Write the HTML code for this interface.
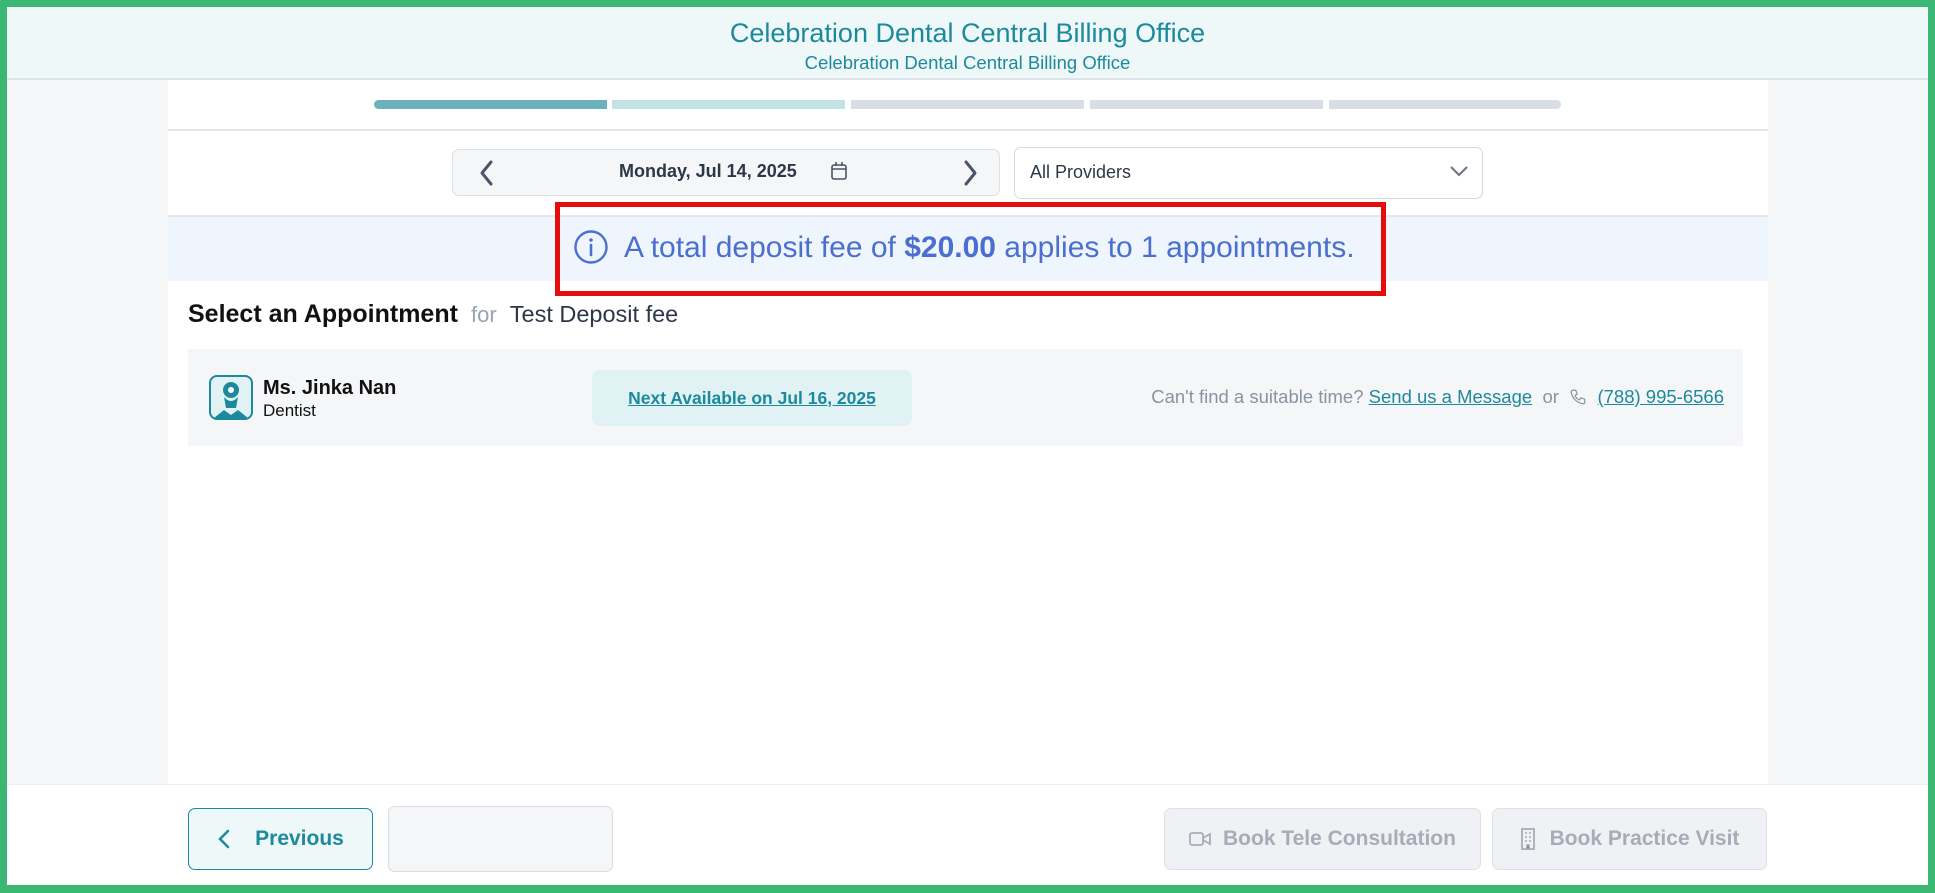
<!DOCTYPE html>
<html><head><meta charset="utf-8"><style>
*{box-sizing:border-box;margin:0;padding:0}
body{width:1935px;height:893px;background:#3bb673;font-family:"Liberation Sans",Arial,sans-serif;position:relative;overflow:hidden}
.frame{position:absolute;left:7px;top:7px;width:1921px;height:878px;background:#f5f6f8;overflow:hidden}
.abs{position:absolute}
.hdr{left:0;top:0;width:1921px;height:73px;background:#eff8f9;border-bottom:2px solid #dde3e8;text-align:center;color:#1c8a9c}
.panel{left:161px;top:73px;width:1600px;height:704px;background:#fff}
.btn{position:absolute;border-radius:7px;display:flex;align-items:center;justify-content:center;font-size:21px;font-weight:600}
</style></head><body>
<div class="frame">
  <div class="abs hdr">
    <div style="position:absolute;top:11px;width:100%;font-size:27px;font-weight:500">Celebration Dental Central Billing Office</div>
    <div style="position:absolute;top:45px;width:100%;font-size:18.5px;font-weight:500">Celebration Dental Central Billing Office</div>
  </div>
  <div class="abs panel"></div>
  <div class="abs" style="left:367px;top:93px;width:233px;height:9px;background:#6bb2bc;border-radius:5px 0 0 5px"></div>
  <div class="abs" style="left:605px;top:93px;width:233px;height:9px;background:#c3e2e6"></div>
  <div class="abs" style="left:844px;top:93px;width:233px;height:9px;background:#d9dee5"></div>
  <div class="abs" style="left:1083px;top:93px;width:233px;height:9px;background:#d9dee5"></div>
  <div class="abs" style="left:1322px;top:93px;width:232px;height:9px;background:#d9dee5;border-radius:0 5px 5px 0"></div>
  <div class="abs" style="left:161px;top:122px;width:1600px;height:2px;background:#e3e7ec"></div>
  <div class="abs" style="left:445px;top:142px;width:548px;height:47px;background:#f5f6f8;border:1.5px solid #dbe0e6;border-radius:7px"></div>
  <svg class="abs" style="left:470px;top:152px" width="20" height="28" viewBox="0 0 20 28"><path d="M14 3 L5 14 L14 25" fill="none" stroke="#4a5568" stroke-width="3" stroke-linecap="round" stroke-linejoin="round"/></svg>
  <div class="abs" style="left:612px;top:154px;font-size:18px;font-weight:600;color:#2d3748">Monday, Jul 14, 2025</div>
  <svg class="abs" style="left:823px;top:154px" width="18" height="20" viewBox="0 0 18 20"><rect x="2" y="4" width="14" height="14" rx="2" fill="none" stroke="#4a5568" stroke-width="1.6"/><path d="M2 8H16M6 1V5M12 1V5" stroke="#4a5568" stroke-width="1.6"/></svg>
  <svg class="abs" style="left:953px;top:152px" width="20" height="28" viewBox="0 0 20 28"><path d="M6 3 L15 14 L6 25" fill="none" stroke="#4a5568" stroke-width="3" stroke-linecap="round" stroke-linejoin="round"/></svg>
  <div class="abs" style="left:1007px;top:140px;width:469px;height:52px;background:#fff;border:1.5px solid #d4dae2;border-radius:7px"></div>
  <div class="abs" style="left:1023px;top:155px;font-size:18px;color:#2d3748">All Providers</div>
  <svg class="abs" style="left:1442px;top:157px" width="20" height="14" viewBox="0 0 20 14"><path d="M2 3 L10 11 L18 3" fill="none" stroke="#6b7280" stroke-width="2"/></svg>
  <div class="abs" style="left:161px;top:208px;width:1600px;height:2px;background:#e3e7ec"></div>
  <div class="abs" style="left:161px;top:210px;width:1600px;height:64px;background:#eff5fd"></div>
  <div class="abs" style="left:548px;top:195px;width:831px;height:94px;border:5px solid #e50e0e"></div>
  <svg class="abs" style="left:566px;top:222px" width="36" height="36" viewBox="0 0 36 36"><circle cx="18" cy="18" r="15.5" fill="none" stroke="#4a6fd0" stroke-width="2.4"/><circle cx="18" cy="11" r="1.8" fill="#4a6fd0"/><path d="M18 16V26" stroke="#4a6fd0" stroke-width="2.6" stroke-linecap="round"/></svg>
  <div class="abs" style="left:617px;top:224px;font-size:30px;color:#4a6fd0;white-space:nowrap">A total deposit fee of <b>$20.00</b> applies to 1 appointments.</div>
  <div class="abs" style="left:181px;top:293px;font-size:25px;white-space:nowrap"><span style="font-weight:600;color:#111">Select an Appointment</span> <span style="color:#9aa3b0;font-size:22px">&nbsp;for&nbsp;</span> <span style="color:#2d3748;font-size:23.5px">Test Deposit fee</span></div>
  <div class="abs" style="left:181px;top:342px;width:1555px;height:97px;background:#f5f6f8"></div>
  <svg class="abs" style="left:202px;top:368px" width="44" height="45" viewBox="0 0 44 45"><rect x="1" y="1" width="42" height="43" rx="7" fill="#e0f2f4" stroke="#1c8a9c" stroke-width="2"/><circle cx="22" cy="15" r="8" fill="#1c8a9c"/><circle cx="22" cy="15" r="3" fill="#fff"/><path d="M15 22 Q22 30 29 22 L27 33 L17 33Z" fill="#1c8a9c"/><path d="M5 43 L15 35 L22 40 L29 35 L39 43Z" fill="#1c8a9c"/></svg>
  <div class="abs" style="left:256px;top:370px;font-size:20px;font-weight:700;color:#111">Ms. Jinka Nan</div>
  <div class="abs" style="left:256px;top:394px;font-size:17px;color:#111">Dentist</div>
  <div class="abs" style="left:585px;top:363px;width:320px;height:56px;background:#e0f2f4;border-radius:8px;display:flex;align-items:center;justify-content:center;font-size:17.5px;font-weight:600;color:#1c8a9c;text-decoration:underline">Next Available on Jul 16, 2025</div>
  <div class="abs" style="right:204px;top:379px;font-size:18.5px;color:#8a939f;white-space:nowrap">Can't find a suitable time? <span style="color:#1c8a9c;text-decoration:underline">Send us a Message</span> &nbsp;or &nbsp;<svg width="18" height="18" viewBox="0 0 24 24" style="vertical-align:-3px"><path d="M5 3h4l2 5-3 2a11 11 0 006 6l2-3 5 2v4a2 2 0 01-2 2A18 18 0 013 5a2 2 0 012-2z" fill="none" stroke="#8a939f" stroke-width="1.6"/></svg> &nbsp;<span style="color:#1c8a9c;text-decoration:underline">(788) 995-6566</span></div>
  <div class="abs" style="left:0;top:777px;width:1921px;height:101px;background:#fff;border-top:1px solid #eceff2"></div>
  <div class="btn" style="left:181px;top:801px;width:185px;height:62px;background:#eff8f9;border:1.5px solid #1c8a9c;color:#1c8a9c"><svg width="14" height="22" viewBox="0 0 14 22" style="margin-right:24px"><path d="M11 3 L3 11 L11 19" fill="none" stroke="#1c8a9c" stroke-width="2.5" stroke-linecap="round"/></svg>Previous</div>
  <div class="btn" style="left:381px;top:799px;width:225px;height:66px;background:#f5f6f8;border:1.5px solid #d8dde4"></div>
  <div class="btn" style="left:1157px;top:801px;width:317px;height:62px;background:#eff1f4;border:1.5px solid #dde1e7;color:#a6adb8"><svg width="22" height="16" viewBox="0 0 22 16" style="margin-right:12px"><rect x="1" y="2" width="13" height="12" rx="2" fill="none" stroke="#a6adb8" stroke-width="1.8"/><path d="M14 7 L21 3 V13 L14 9" fill="none" stroke="#a6adb8" stroke-width="1.8"/></svg>Book Tele Consultation</div>
  <div class="btn" style="left:1485px;top:801px;width:275px;height:62px;background:#eff1f4;border:1.5px solid #dde1e7;color:#a6adb8"><svg width="16" height="22" viewBox="0 0 16 22" style="margin-right:14px"><rect x="2" y="1" width="12" height="20" fill="none" stroke="#a6adb8" stroke-width="1.8"/><path d="M5 5h2M9 5h2M5 9h2M9 9h2M5 13h2M9 13h2M7 17h2v4H7z" stroke="#a6adb8" stroke-width="1.6"/></svg>Book Practice Visit</div>
</div>
</body></html>
